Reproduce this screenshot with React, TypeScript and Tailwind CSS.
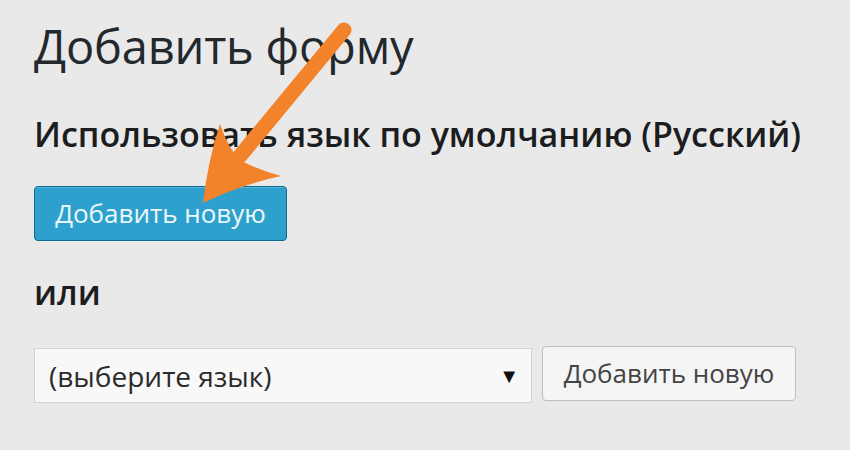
import React from "react";

export default function App() {
  return (
    <div
      className="relative w-[850px] h-[450px] overflow-hidden bg-[#e9e9e9] text-[#23282d]"
      style={{ fontFamily: '"Open Sans", "Liberation Sans", sans-serif' }}
    >
      <div className="flex flex-col pl-[34px] pt-[16px]">
        <h1 className="text-[47px] leading-[60px] font-normal tracking-[-0.2px]">Добавить форму</h1>
        <h2 className="mt-[38px] text-[34px] leading-[40px] font-semibold text-[#1b1d20]">
          Использовать язык по умолчанию (Русский)
        </h2>
        <div className="mt-[32px]">
          <button className="h-[55px] w-[253px] rounded-[4px] border border-[#0e6a92] bg-[#2ea0cd] text-[26px] text-[#eaf7fb] shadow-[inset_0_1px_0_rgba(120,200,230,0.6)]">
            Добавить новую
          </button>
        </div>
        <div className="mt-[31px] text-[34px] leading-[40px] font-semibold text-[#1b1d20]">или</div>
        <div className="mt-[32px] flex items-center gap-[10px]">
          <div className="mt-[4px] flex h-[55px] w-[498px] items-center justify-between border border-[#d2d2d2] bg-[#f8f8f8] pl-[14px] pr-[12px] text-[28px] text-[#2b2b2b]">
            <span>(выберите язык)</span>
            <span className="text-[20px] text-[#111]">▼</span>
          </div>
          <button className="h-[55px] w-[254px] rounded-[4px] border border-[#bdbdbd] bg-[#f5f5f5] text-[26px] text-[#444]">
            Добавить новую
          </button>
        </div>
      </div>
      <svg className="absolute left-0 top-0" width="850" height="450" viewBox="0 0 850 450">
        <line x1="344" y1="30" x2="240" y2="156" stroke="#f2832b" strokeWidth="15" strokeLinecap="round" />
        <path
          d="M203 203 Q208 160 220 124 Q228 148 240 160 Q258 170 281 176 Q240 185 203 203 Z"
          fill="#f2832b"
        />
      </svg>
    </div>
  );
}
